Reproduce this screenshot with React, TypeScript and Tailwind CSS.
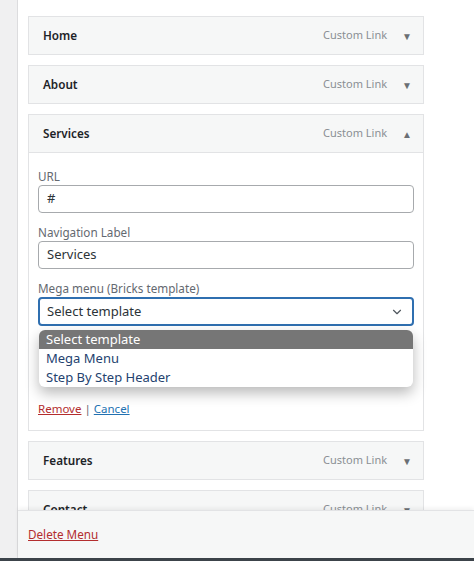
import { ChevronDown } from 'lucide-react'

const font = { fontFamily: '"Noto Sans", "Open Sans", sans-serif' }

/* collapsed menu item row */
function ItemHeader({ title, open = false }: { title: string; open?: boolean }) {
  return (
    <div className="flex h-[39px] shrink-0 items-center justify-between border border-[#e2e3e5] bg-[#f6f7f7] pl-[14px] pr-[11px]">
      <span className="text-[11.7px] font-semibold text-[#1d2327]">{title}</span>
      <span className="flex items-center gap-[15px]">
        <span className="text-[11px] text-[#8a8f94]">Custom Link</span>
        <span className="text-[10px] leading-none text-[#6b6f74]">{open ? '▲' : '▼'}</span>
      </span>
    </div>
  )
}

function Field({ label, value }: { label: string; value: string }) {
  return (
    <div className="flex flex-col">
      <label className="text-[11.7px] leading-[16px] text-[#646970]">{label}</label>
      <div className="mt-[1px] flex h-[28px] items-center rounded-[4px] border border-[#a7aaad] bg-white px-[8px] text-[13px] text-[#2c3338]">
        {value}
      </div>
    </div>
  )
}

export default function App() {
  return (
    <div className="flex h-[561px] w-[474px] flex-col overflow-hidden bg-white" style={font}>
      <div className="flex h-[558px]">
        <div className="w-[18px] shrink-0 border-r border-[#dcdcde] bg-[#f0f0f1]" />
        <div className="flex min-w-0 flex-1 flex-col">
          <div className="flex flex-1 flex-col gap-[10px] overflow-hidden pl-[10px] pr-[50px] pt-[16px]">
            <ItemHeader title="Home" />
            <ItemHeader title="About" />

            <div className="shrink-0">
              <ItemHeader title="Services" open />
              <div className="relative border border-t-0 border-[#e2e3e5] bg-white px-[9px] pb-[13px] pt-[15px]">
                <div className="flex flex-col gap-[11px]">
                  <Field label="URL" value="#" />
                  <Field label="Navigation Label" value="Services" />
                  <div className="flex flex-col">
                    <label className="text-[11.7px] leading-[16px] text-[#646970]">Mega menu (Bricks template)</label>
                    <div className="mt-[1px] flex h-[29px] items-center justify-between rounded-[4px] border-2 border-[#2f6fb0] bg-white pl-[7px] pr-[8px] text-[13px] text-[#2c3338]">
                      Select template
                      <ChevronDown className="h-[14px] w-[14px] text-[#50575e]" strokeWidth={2} />
                    </div>
                  </div>
                </div>

                {/* open native select list */}
                <div className="absolute left-[10px] right-[10px] top-[177px] overflow-hidden rounded-[6px] bg-white text-[13px] leading-[19px] text-[#24426f] shadow-[0_6px_14px_rgba(0,0,0,0.28)]">
                  <div className="bg-[#767676] px-[7px] text-white">Select template</div>
                  <div className="px-[7px]">Mega Menu</div>
                  <div className="px-[7px]">Step By Step Header</div>
                </div>

                <div className="mt-[75px] text-[11.5px] leading-[16px] text-[#646970]">
                  <a className="text-[#b32d2e] underline">Remove</a> | <a className="text-[#2271b1] underline">Cancel</a>
                </div>
              </div>
            </div>

            <ItemHeader title="Features" />
            <ItemHeader title="Contact" />
          </div>

          <div className="relative z-10 flex h-[48px] shrink-0 items-center border-t border-[#e2e3e5] bg-[#f6f7f7] pl-[10px] shadow-[0_-2px_4px_rgba(0,0,0,0.06)]">
            <a className="text-[11.7px] text-[#b32d2e] underline">Delete Menu</a>
          </div>
        </div>
      </div>
      <div className="h-[3px] bg-[#3c434a]" />
    </div>
  )
}
